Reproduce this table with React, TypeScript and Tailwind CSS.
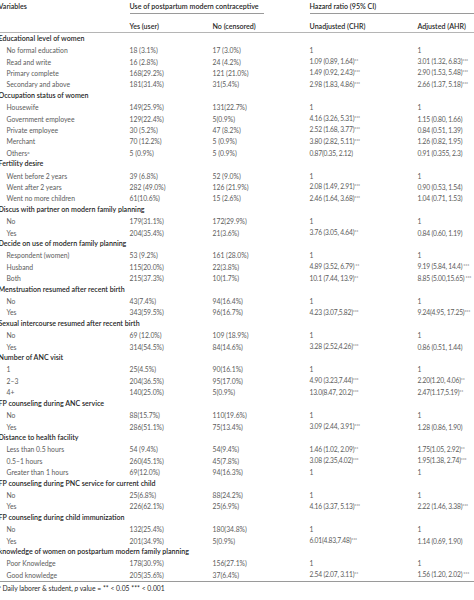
import type { ReactNode } from "react";

type Row = [string, string, string, string, string];
type Section = { title: string; rows: Row[] };

const sections: Section[] = [
  {
    title: "Educational level of women",
    rows: [
      ["No formal education", "18 (3.1%)", "17 (3.0%)", "1", "1"],
      ["Read and write", "16 (2.8%)", "24 (4.2%)", "1.09 (0.89, 1.64)**", "3.01 (1.32, 6.83)***"],
      ["Primary complete", "168(29.2%)", "121 (21.0%)", "1.49 (0.92, 2.43)***", "2.90 (1.53, 5.48)***"],
      ["Secondary and above", "181(31.4%)", "31(5.4%)", "2.98 (1.83, 4.86)***", "2.66 (1.37, 5.18)***"],
    ],
  },
  {
    title: "Occupation status of women",
    rows: [
      ["Housewife", "149(25.9%)", "131(22.7%)", "1", "1"],
      ["Government employee", "129(22.4%)", "5(0.9%)", "4.16 (3.26, 5.31)***", "1.15 (0.80, 1.66)"],
      ["Private employee", "30 (5.2%)", "47 (8.2%)", "2.52 (1.68, 3.77)***", "0.84 (0.51, 1.39)"],
      ["Merchant", "70 (12.2%)", "5 (0.9%)", "3.80 (2.82, 5.11)***", "1.26 (0.82, 1.95)"],
      ["Others^", "5 (0.9%)", "5 (0.9%)", "0.87(0.35, 2.12)", "0.91 (0.355, 2.3)"],
    ],
  },
  {
    title: "Fertility desire",
    rows: [
      ["Went before 2 years", "39 (6.8%)", "52 (9.0%)", "1", "1"],
      ["Went after 2 years", "282 (49.0%)", "126 (21.9%)", "2.08 (1.49, 2.91)***", "0.90 (0.53, 1.54)"],
      ["Went no more children", "61(10.6%)", "15 (2.6%)", "2.46 (1.64, 3.68)***", "1.04 (0.71, 1.53)"],
    ],
  },
  {
    title: "Discus with partner on modern family planning",
    rows: [
      ["No", "179(31.1%)", "172(29.9%)", "1", "1"],
      ["Yes", "204(35.4%)", "21(3.6%)", "3.76 (3.05, 4.64)**", "0.84 (0.60, 1.19)"],
    ],
  },
  {
    title: "Decide on use of modern family planning",
    rows: [
      ["Respondent (women)", "53 (9.2%)", "161 (28.0%)", "1", "1"],
      ["Husband", "115(20.0%)", "22(3.8%)", "4.89 (3.52, 6.79) **", "9.19 (5.84, 14.4) ***"],
      ["Both", "215(37.3%)", "10(1.7%)", "10.1 (7.44, 13.9)**", "8.85 (5.00,15.65) ***"],
    ],
  },
  {
    title: "Menstruation resumed after recent birth",
    rows: [
      ["No", "43(7.4%)", "94(16.4%)", "1", "1"],
      ["Yes", "343(59.5%)", "96(16.7%)", "4.23 (3.07,5.82)***", "9.24(4.95, 17.25)***"],
    ],
  },
  {
    title: "Sexual intercourse resumed after recent birth",
    rows: [
      ["No", "69 (12.0%)", "109 (18.9%)", "1", "1"],
      ["Yes", "314(54.5%)", "84(14.6%)", "3.28 (2.52,4.26)***", "0.86 (0.51, 1.44)"],
    ],
  },
  {
    title: "Number of ANC visit",
    rows: [
      ["1", "25(4.5%)", "90(16.1%)", "1", "1"],
      ["2–3", "204(36.5%)", "95(17.0%)", "4.90 (3.23,7.44)***", "2.20(1.20, 4.06)**"],
      ["4+", "140(25.0%)", "5(0.9%)", "13.0(8.47, 20.2)***", "2.47(1.17,5.19)**"],
    ],
  },
  {
    title: "FP counseling during ANC service",
    rows: [
      ["No", "88(15.7%)", "110(19.6%)", "1", "1"],
      ["Yes", "286(51.1%)", "75(13.4%)", "3.09 (2.44, 3.91)***", "1.28 (0.86, 1.90)"],
    ],
  },
  {
    title: "Distance to health facility",
    rows: [
      ["Less than 0.5 hours", "54 (9.4%)", "54(9.4%)", "1.46 (1.02, 2.09)**", "1.75(1.05, 2.92)**"],
      ["0.5–1 hours", "260(45.1%)", "45(7.8%)", "3.08 (2.35,4.02)***", "1.95(1.38, 2.74)***"],
      ["Greater than 1 hours", "69(12.0%)", "94(16.3%)", "1", "1"],
    ],
  },
  {
    title: "FP counseling during PNC service for current child",
    rows: [
      ["No", "25(6.8%)", "88(24.2%)", "1", "1"],
      ["Yes", "226(62.1%)", "25(6.9%)", "4.16 (3.37, 5.13)***", "2.22 (1.46, 3.38)***"],
    ],
  },
  {
    title: "FP counseling during child immunization",
    rows: [
      ["No", "132(25.4%)", "180(34.8%)", "1", "1"],
      ["Yes", "201(34.9%)", "5(0.9%)", "6.01(4.83,7.48)***", "1.14 (0.69, 1.90)"],
    ],
  },
  {
    title: "knowledge of women on postpartum modern family planning",
    rows: [
      ["Poor Knowledge", "178(30.9%)", "156(27.1%)", "1", "1"],
      ["Good knowledge", "205(35.6%)", "37(6.4%)", "2.54 (2.07, 3.11)**", "1.56 (1.20, 2.02) ***"],
    ],
  },
];

const cols = "grid grid-cols-[131px_83px_97px_108px_1fr]";

// hazard ratio cells: slightly tighter digits, stars small and raised
function Cell({ text }: { text: string }) {
  const m = text.match(/^(.*?)(\s?\*+)$/);
  if (!m) return <span className="text-[6.7px] tracking-[-0.2px]">{text}</span>;
  return (
    <span className="text-[6.7px] tracking-[-0.2px]">
      {m[1]}
      <span className="relative top-[-1px] text-[5px]">{m[2]}</span>
    </span>
  );
}

function Label({ text }: { text: string }) {
  if (text.endsWith("^")) {
    return (
      <span className="pl-[8px]">
        {text.slice(0, -1)}
        <sup className="text-[4.5px]">a</sup>
      </span>
    );
  }
  return <span className="pl-[8px]">{text}</span>;
}

function SectionTitle({ children }: { children: ReactNode }) {
  return (
    <div className="flex h-[11.42px] items-center text-[7.1px] font-semibold text-[#1f1f1f]">
      {children}
    </div>
  );
}

export default function App() {
  return (
    <div
      className="h-[600px] w-[474px] overflow-hidden bg-white text-[6.8px] leading-[8px] text-[#5c5c5c]"
      style={{ fontFamily: "Lato, 'Noto Sans', sans-serif" }}
    >
      <div className="-ml-[1.5px]">
        {/* header */}
        <div className={`${cols} h-[13px] items-center text-[7.1px] font-semibold text-[#1f1f1f]`}>
          <span>Variables</span>
          <span className="col-span-2">Use of postpartum modern contraceptive</span>
          <span className="col-span-2">Hazard ratio (95% CI)</span>
        </div>
        <div className={cols}>
          <span />
          <span className="col-span-2 mr-[46px] h-px bg-[#9a9a9a]" />
          <span className="col-span-2 h-px bg-[#9a9a9a]" />
        </div>
        <div
          className={`${cols} h-[18px] items-center pt-[8px] text-[7.1px] font-semibold text-[#2a2a2a]`}
        >
          <span />
          <span>Yes (user)</span>
          <span>No (censored)</span>
          <span>Unadjusted (CHR)</span>
          <span>Adjusted (AHR)</span>
        </div>
        <div className="h-px bg-[#b5b5b5]" />

        {/* body */}
        {sections.map((s) => (
          <div key={s.title}>
            <SectionTitle>{s.title}</SectionTitle>
            {s.rows.map((r, i) => (
              <div key={i} className={`${cols} h-[11.42px] items-center whitespace-nowrap`}>
                <Label text={r[0]} />
                <span>{r[1]}</span>
                <span>{r[2]}</span>
                <Cell text={r[3]} />
                <Cell text={r[4]} />
              </div>
            ))}
          </div>
        ))}

        <div className="h-px bg-[#9a9a9a]" />
        <div className="flex h-[12px] items-center text-[#2a2a2a]">
          <span>
            <sup className="text-[4.5px]">a</sup> Daily laborer &amp; student, <i>p</i> value = ** &lt;
            0.05 *** &lt; 0.001
          </span>
        </div>
      </div>
    </div>
  );
}
